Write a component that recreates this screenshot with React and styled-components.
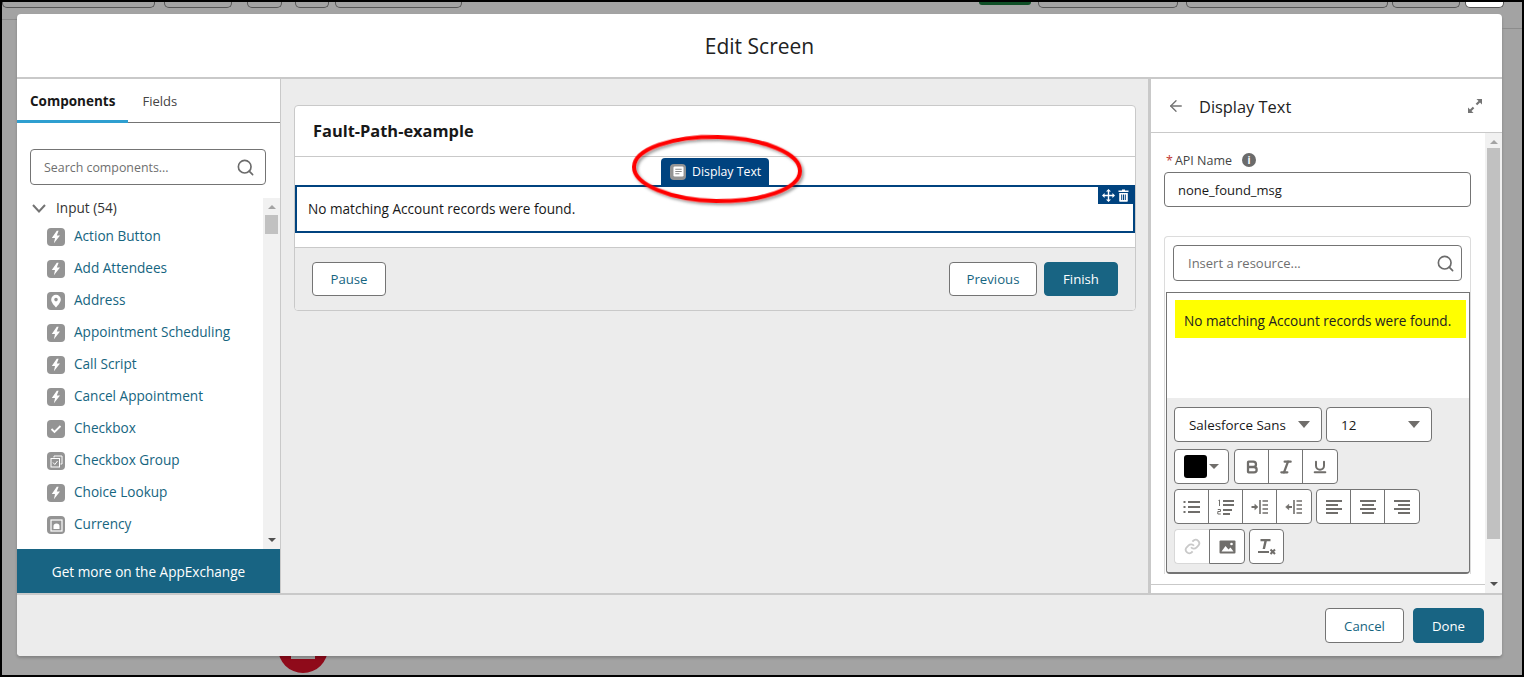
import React from "react"
import styled, { createGlobalStyle } from "styled-components"
import { ArrowLeft, Search as SearchIcon, Bold, Italic, Underline } from "lucide-react"

const Colors = {
  brand: "#186483",
  link: "#16657f",
  navy: "#00437f",
  border: "#747474",
  line: "#c9c9c9",
  shade: "#ececec",
  tile: "#949494",
  text: "#181818",
}

const GlobalStyle = createGlobalStyle`
  html, body {
    margin: 0;
    padding: 0;
    background: #a3a3a3;
  }
  body {
    font-family: "Open Sans", "Liberation Sans", sans-serif;
    font-size: 13.6px;
    color: ${Colors.text};
  }
  * {
    box-sizing: border-box;
  }
`

const Screen = styled.div`
  position: relative;
  width: 1524px;
  height: 677px;
  border: 2px solid #000;
  background: #a3a3a3;
  display: flex;
  flex-direction: column;
  overflow: hidden;
`

const BehindTop = styled.div`
  height: 12px;
  display: flex;
  align-items: flex-start;
`

const BehindButton = styled.div`
  height: 6px;
  width: ${props => props.$w}px;
  margin-left: ${props => props.$gap}px;
  border: 1px solid #555;
  border-top: 0;
  border-radius: 0 0 5px 5px;
  background: ${props => props.$bg || "transparent"};
  flex-shrink: 0;
`

const BehindPill = styled.div`
  height: 3px;
  width: 52px;
  margin-left: ${props => props.$gap}px;
  border-radius: 0 0 14px 14px;
  background: #0f4f26;
  flex-shrink: 0;
`

const MiddleRow = styled.div`
  display: flex;
  height: 642px;
  position: relative;
  z-index: 2;
`

const Gutter = styled.div`
  flex: 0 0 ${props => props.$w}px;
`

const GutterLine = styled.div`
  height: 1px;
  background: #8c8c8c;
  margin-top: ${props => props.$top}px;
`

const Modal = styled.div`
  width: 1485px;
  display: flex;
  flex-direction: column;
  background: #fff;
  border-radius: 4px;
  box-shadow: 0 2px 3px rgba(0, 0, 0, 0.2);
  overflow: hidden;
`

const ModalHeader = styled.div`
  height: 65px;
  flex-shrink: 0;
  border-bottom: 2px solid ${Colors.line};
  display: flex;
  align-items: center;
  justify-content: center;
  font-size: 21px;
  color: #222;
`

const ModalBody = styled.div`
  height: 514px;
  display: flex;
`

const ModalFooter = styled.div`
  height: 63px;
  flex-shrink: 0;
  border-top: 2px solid ${Colors.line};
  background: ${Colors.shade};
  display: flex;
  align-items: center;
  justify-content: flex-end;
  gap: 9px;
  padding-right: 18px;
`

const BehindBottom = styled.div`
  height: 19px;
  padding-left: 276px;
`

const RedCircle = styled.div`
  width: 50px;
  height: 50px;
  margin-top: -33px;
  border-radius: 50%;
  background: #8f0a1a;
  display: flex;
  justify-content: center;
  align-items: flex-end;
  padding-bottom: 14px;

  &::after {
    content: "";
    width: 24px;
    height: 10px;
    background: #a3a3a3;
  }
`

/* left palette */

const LeftPanel = styled.div`
  width: 264px;
  flex-shrink: 0;
  border-right: 1px solid ${Colors.line};
  display: flex;
  flex-direction: column;
`

const Tabs = styled.div`
  height: 44px;
  flex-shrink: 0;
  display: flex;
  border-bottom: 1px solid ${Colors.border};
`

const Tab = styled.div`
  padding: 2px 13px 0 ${props => (props.$active ? 13 : 14)}px;
  height: 44px;
  display: flex;
  align-items: center;
  font-size: ${props => (props.$active ? 13.5 : 13)}px;
  font-weight: ${props => (props.$active ? 700 : 400)};
  color: ${props => (props.$active ? Colors.text : "#444")};
  border-bottom: 3px solid ${props => (props.$active ? "#2e9fd0" : "transparent")};
`

const SearchBox = styled.div`
  height: ${props => props.$h}px;
  flex-shrink: 0;
  margin: ${props => props.$margin};
  border: 1px solid ${Colors.border};
  border-radius: 4px;
  background: #fff;
  display: flex;
  align-items: center;
  justify-content: space-between;
  padding: 0 ${props => props.$right}px 0 ${props => props.$left}px;
  font-size: ${props => props.$font}px;
  color: #6f6f6f;
`

const PaletteRow = styled.div`
  flex: 1;
  display: flex;
  min-height: 0;
`

const PaletteList = styled.div`
  flex: 1;
  overflow: hidden;
  padding-left: 15px;
`

const GroupHead = styled.div`
  height: 20px;
  margin-bottom: 10px;
  display: flex;
  align-items: center;
  gap: 10px;
  color: #333;
`

const GroupLabel = styled.span`
  margin-top: -2px;
`

const PaletteItem = styled.div`
  height: 18px;
  margin: 0 0 14px 15px;
  display: flex;
  align-items: center;
  gap: 9px;
  color: ${Colors.link};
`

const ItemLabel = styled.span`
  margin-top: -3px;
`

const IconTile = styled.span`
  width: ${props => props.$size || 18}px;
  height: ${props => props.$size || 18}px;
  border-radius: 4px;
  background: ${Colors.tile};
  flex-shrink: 0;
  display: flex;
  align-items: center;
  justify-content: center;
`

const Scrollbar = styled.div`
  width: 17px;
  flex-shrink: 0;
  background: #f1f1f1;
  display: flex;
  flex-direction: column;
  align-items: center;
  padding: 7px 0;
`

const ArrowUp = styled.div`
  width: 0;
  height: 0;
  border: 4px solid transparent;
  border-top: 0;
  border-bottom: 4px solid #a3a3a3;
`

const ArrowDown = styled.div`
  width: 0;
  height: 0;
  border: 4px solid transparent;
  border-bottom: 0;
  border-top: 4px solid #505050;
  margin-top: auto;
`

const Thumb = styled.div`
  width: 13px;
  height: ${props => props.$h}px;
  margin-top: ${props => props.$top}px;
  background: #c1c1c1;
`

const AppExchange = styled.div`
  height: 44px;
  flex-shrink: 0;
  background: ${Colors.brand};
  color: #fff;
  display: flex;
  align-items: center;
  justify-content: center;
`

/* centre canvas */

const Canvas = styled.div`
  width: 867px;
  flex-shrink: 0;
  background: ${Colors.shade};
  padding: 26px 0 0 13px;
`

const Card = styled.div`
  width: 842px;
  height: 206px;
  border: 1px solid ${Colors.line};
  border-radius: 4px;
  overflow: hidden;
  display: flex;
  flex-direction: column;
  background: #fff;
`

const CardTitle = styled.div`
  height: 51px;
  flex-shrink: 0;
  border-bottom: 1px solid ${Colors.line};
  display: flex;
  align-items: center;
  padding: 0 0 2px 18px;
  font-size: 16.4px;
  font-weight: 700;
`

const DisplayArea = styled.div`
  height: 91px;
  flex-shrink: 0;
  border-bottom: 1px solid ${Colors.line};
`

const TabHolder = styled.div`
  height: 29px;
  display: flex;
  justify-content: center;
  align-items: flex-end;
`

const ComponentTab = styled.div`
  width: 108px;
  height: 28px;
  background: ${Colors.navy};
  border-radius: 4px 4px 0 0;
  display: flex;
  align-items: center;
  gap: 6px;
  padding: 0 0 1px 9px;
  font-size: 12.3px;
  color: #fff;
`

const SelectedBox = styled.div`
  position: relative;
  height: 48px;
  margin-top: -1px;
  border: 2px solid ${Colors.navy};
  display: flex;
  align-items: center;
  padding: 0 0 2px 11px;
`

const Badge = styled.div`
  position: absolute;
  top: 0;
  right: 0;
  width: 35px;
  height: 17px;
  background: ${Colors.navy};
  display: flex;
  align-items: center;
  justify-content: center;
  gap: 3px;
`

const CardFooter = styled.div`
  flex: 1;
  background: ${Colors.shade};
  display: flex;
  align-items: center;
  justify-content: space-between;
  padding: 0 17px;
`

const ButtonRow = styled.div`
  display: flex;
  gap: 7px;
`

const Button = styled.button`
  height: ${props => props.$h || 35}px;
  width: ${props => props.$w}px;
  border-radius: 4px;
  border: 1px solid ${props => (props.$brand ? Colors.brand : Colors.border)};
  background: ${props => (props.$brand ? Colors.brand : "#fff")};
  color: ${props => (props.$brand ? "#fff" : Colors.link)};
  font-family: inherit;
  font-size: 13.2px;
  padding: 0;
`

/* right properties panel */

const RightPanel = styled.div`
  flex: 1;
  border-left: 3px solid ${Colors.line};
  display: flex;
  flex-direction: column;
  min-width: 0;
`

const PanelHead = styled.div`
  height: 54px;
  flex-shrink: 0;
  border-bottom: 1px solid ${Colors.line};
  display: flex;
  align-items: center;
  padding: 0 19px 0 16px;
  font-size: 16.4px;
  color: #222;
`

const PanelTitle = styled.span`
  margin: 2px 0 0 14px;
  flex: 1;
`

const PanelRow = styled.div`
  height: 460px;
  flex-shrink: 0;
  display: flex;
`

const PanelColumn = styled.div`
  flex: 1;
  min-width: 0;
`

const PanelForm = styled.div`
  height: 452px;
  overflow: hidden;
  padding: 18px 0 0 13px;
  border-bottom: 1px solid ${Colors.line};
`

const Label = styled.div`
  height: 18px;
  display: flex;
  align-items: center;
  margin-bottom: 3px;
  font-size: 12.5px;
  color: #444;
`

const Required = styled.span`
  color: #c23934;
  margin: 0 2px 0 2px;
`

const InfoDot = styled.span`
  width: 14px;
  height: 14px;
  margin-left: 10px;
  border-radius: 50%;
  background: #6b6b6b;
  color: #fff;
  font-size: 10px;
  font-weight: 700;
  display: flex;
  align-items: center;
  justify-content: center;
`

const TextInput = styled.div`
  width: 307px;
  height: 35px;
  border: 1px solid ${Colors.border};
  border-radius: 4px;
  display: flex;
  align-items: center;
  padding-left: 13px;
  font-size: 13px;
`

const EditorCard = styled.div`
  width: 307px;
  margin-top: 29px;
  border: 1px solid #dcdcdc;
  border-bottom: 0;
  border-radius: 4px 4px 0 0;
`

const ResourceHolder = styled.div`
  padding: 8px 8px 11px;
`

const Editor = styled.div`
  margin: 0 0 0 1px;
  width: 304px;
  border: 1px solid ${Colors.border};
  border-bottom: 2px solid ${Colors.border};
  border-radius: 0 0 4px 4px;
  overflow: hidden;
`

const EditorText = styled.div`
  height: 105px;
  padding: 7px 3px 0 8px;
`

const Highlight = styled.div`
  height: 38px;
  background: #ffff00;
  display: flex;
  align-items: center;
  padding: 3px 0 0 9px;
  color: #222;
`

const Toolbar = styled.div`
  background: ${Colors.shade};
  padding: 9px 0 8px 7px;
  display: flex;
  flex-direction: column;
  gap: 5px;
`

const ToolRow = styled.div`
  display: flex;
  gap: ${props => props.$gap || 4}px;
  margin-bottom: ${props => props.$after || 0}px;
`

const Select = styled.div`
  width: ${props => props.$w}px;
  height: 35px;
  background: #fff;
  border: 1px solid ${Colors.border};
  border-radius: 4px;
  display: flex;
  align-items: center;
  justify-content: space-between;
  padding: 0 11px 0 14px;
  font-size: 13.4px;
`

const Caret = styled.span`
  width: 0;
  height: 0;
  border: ${props => props.$size || 6}px solid transparent;
  border-bottom: 0;
  border-top: ${props => (props.$size ? props.$size : 7)}px solid #706e6b;
`

const ColorButton = styled.div`
  width: 55px;
  height: 35px;
  background: #fff;
  border: 1px solid ${Colors.border};
  border-radius: 4px;
  display: flex;
  align-items: center;
  gap: 2px;
  padding-left: 9px;
`

const Swatch = styled.span`
  width: 23px;
  height: 23px;
  background: #000;
  border-radius: 3px;
`

const ToolGroup = styled.div`
  display: flex;
  height: 35px;
  border: 1px solid ${Colors.border};
  border-radius: 4px;
  overflow: hidden;
  background: #fff;
`

const ToolButton = styled.div`
  width: ${props => props.$w || 34}px;
  display: flex;
  align-items: center;
  justify-content: center;
  color: #706e6b;
  border-right: 1px solid ${Colors.border};
  &:last-child {
    border-right: 0;
  }
`

/* the link button is disabled, so its half of the pair has a pale outline */
const JoinedTools = styled.div`
  display: flex;
`

const DisabledTool = styled.div`
  width: 35px;
  height: 35px;
  background: #fff;
  border: 1px solid #d8d8d8;
  border-right: 0;
  border-radius: 4px 0 0 4px;
  display: flex;
  align-items: center;
  justify-content: center;
`

const JoinedEnd = styled(ToolGroup)`
  border-radius: 0 4px 4px 0;
`

const Bolt = () => (
  <svg width="12" height="14" viewBox="0 0 12 14">
    <path d="M6.8 0.8 L1.8 7.9 H5 L3.9 13.2 L10 5.6 H6.8 L8.6 0.8 Z" fill="#fff" />
  </svg>
)

const Pin = () => (
  <svg width="12" height="14" viewBox="0 0 12 14">
    <path
      fillRule="evenodd"
      d="M6 0.8 A4.8 4.8 0 0 0 1.2 5.6 C1.2 8.6 4.4 11.8 6 13.4 C7.6 11.8 10.8 8.6 10.8 5.6 A4.8 4.8 0 0 0 6 0.8 Z M6 3.8 A1.8 1.8 0 1 1 6 7.4 A1.8 1.8 0 1 1 6 3.8 Z"
      fill="#fff"
    />
  </svg>
)

const Check = () => (
  <svg width="12" height="10" viewBox="0 0 12 10">
    <path d="M1.5 5 L4.5 8 L10.5 2" stroke="#fff" strokeWidth="1.8" fill="none" />
  </svg>
)

const Group = () => (
  <svg width="13" height="13" viewBox="0 0 13 13" fill="none" stroke="#fff" strokeWidth="1">
    <path d="M4 2.5 V1 H12 V9 H10.5" />
    <rect x="1" y="3.5" width="8.5" height="8.5" />
    <path d="M3 7.5 L4.8 9.5 L7.5 6" />
  </svg>
)

const Currency = () => (
  <svg width="13" height="13" viewBox="0 0 13 13">
    <rect x="1" y="1" width="11" height="11" fill="none" stroke="#fff" strokeWidth="1.2" />
    <path d="M3.5 10 V7 A3 2.6 0 0 1 9.5 7 V10 Z" fill="#fff" />
  </svg>
)

const TextLines = () => (
  <svg width="11" height="11" viewBox="0 0 12 12">
    <rect x="0.5" y="0.5" width="11" height="11" rx="1.5" fill="#fff" />
    <path d="M2.5 3.5 H9.5 M2.5 6 H9.5 M2.5 8.5 H7" stroke="#8a8a8a" strokeWidth="1.1" />
  </svg>
)

const tileIcons = { bolt: Bolt, pin: Pin, check: Check, group: Group, currency: Currency }

const paletteItems = [
  ["bolt", "Action Button"],
  ["bolt", "Add Attendees"],
  ["pin", "Address"],
  ["bolt", "Appointment Scheduling"],
  ["bolt", "Call Script"],
  ["bolt", "Cancel Appointment"],
  ["check", "Checkbox"],
  ["group", "Checkbox Group"],
  ["bolt", "Choice Lookup"],
  ["currency", "Currency"],
]

const Glass = () => <SearchIcon size={19} color="#6b6b6b" strokeWidth={2.1} />

const Chevron = () => (
  <svg width="14" height="9" viewBox="0 0 14 9">
    <path d="M1 1 L7 7.5 L13 1" stroke="#747474" strokeWidth="2" fill="none" />
  </svg>
)

const Expand = () => (
  <svg width="16" height="16" viewBox="0 0 16 16" fill="#747474">
    <path d="M9.5 1 H15 V6.5 L13 4.5 L10.2 7.3 L8.7 5.8 L11.5 3 Z" />
    <path d="M6.5 15 H1 V9.5 L3 11.5 L5.8 8.7 L7.3 10.2 L4.5 13 Z" />
  </svg>
)

const MoveIcon = () => (
  <svg width="13" height="13" viewBox="0 0 13 13" fill="#fff">
    <path d="M6.5 0 L9 2.6 H7.2 V5.8 H10.4 V4 L13 6.5 L10.4 9 V7.2 H7.2 V10.4 H9 L6.5 13 L4 10.4 H5.8 V7.2 H2.6 V9 L0 6.5 L2.6 4 V5.8 H5.8 V2.6 H4 Z" />
  </svg>
)

const TrashIcon = () => (
  <svg width="11" height="13" viewBox="0 0 11 13" fill="#fff">
    <path d="M4 0.5 H7 V1.5 H10.5 V3 H0.5 V1.5 H4 Z" />
    <path
      fillRule="evenodd"
      d="M1.2 4 H9.8 V12 A0.8 0.8 0 0 1 9 12.8 H2 A0.8 0.8 0 0 1 1.2 12 Z M3.2 5.5 V11 H4.2 V5.5 Z M5 5.5 V11 H6 V5.5 Z M6.8 5.5 V11 H7.8 V5.5 Z"
    />
  </svg>
)

const Ink = ({ children, w = 18, h = 16 }) => (
  <svg
    width={w}
    height={h}
    viewBox={`0 0 ${w} ${h}`}
    fill="none"
    stroke="#706e6b"
    strokeWidth="2"
  >
    {children}
  </svg>
)

const BulletList = () => (
  <Ink>
    <path d="M5 3 H17 M5 8 H17 M5 13 H17" />
    <path d="M0.5 3 H2.5 M0.5 8 H2.5 M0.5 13 H2.5" />
  </Ink>
)

const NumberList = () => (
  <Ink>
    <path d="M6 2 H17 M6 6 H17 M6 11 H15 M6 15 H13" />
    <path d="M1.5 1.5 L2.5 1 V7" strokeWidth="1" />
    <path d="M0.8 10.5 H3.5 V12.5 H0.8 V15 H3.8" strokeWidth="1" />
  </Ink>
)

const IndentIn = () => (
  <Ink>
    <path d="M0.5 8 H5.5" />
    <path d="M3.8 5.2 L7 8 L3.8 10.8 Z" fill="#706e6b" strokeWidth="0.5" />
    <path d="M9 1 V15" strokeWidth="1.6" />
    <path d="M11.5 2 H17 M11.5 6 H17 M11.5 10 H17 M11.5 14 H17" strokeWidth="1.5" />
  </Ink>
)

const IndentOut = () => (
  <Ink>
    <path d="M2.5 8 H7" />
    <path d="M3.8 5.2 L0.6 8 L3.8 10.8 Z" fill="#706e6b" strokeWidth="0.5" />
    <path d="M9 1 V15" strokeWidth="1.6" />
    <path d="M11.5 2 H17 M11.5 6 H17 M11.5 10 H17 M11.5 14 H17" strokeWidth="1.5" />
  </Ink>
)

const alignLines = {
  left: "M1 2 H17 M1 6 H13 M1 10 H17 M1 14 H13",
  center: "M1 2 H17 M3 6 H15 M1 10 H17 M3 14 H15",
  right: "M1 2 H17 M5 6 H17 M1 10 H17 M5 14 H17",
}

const AlignIcon = ({ side }) => (
  <Ink>
    <path d={alignLines[side]} />
  </Ink>
)

const LinkIcon = () => (
  <svg width="17" height="17" viewBox="0 0 24 24" fill="none" stroke="#c9c9c9" strokeWidth="2.6">
    <path d="M10 13a5 5 0 0 0 7.5.5l3-3a5 5 0 0 0-7-7l-1.7 1.7" />
    <path d="M14 11a5 5 0 0 0-7.5-.5l-3 3a5 5 0 0 0 7 7l1.7-1.7" />
  </svg>
)

const PictureIcon = () => (
  <svg width="17" height="14" viewBox="0 0 17 14">
    <rect x="0.5" y="0.5" width="16" height="13" rx="1" fill="#706e6b" />
    <path d="M2.5 11.5 L6.5 6 L9.5 9.5 L11.5 7.5 L14.5 11.5 Z" fill="#fff" />
    <circle cx="12.5" cy="4" r="1.3" fill="#fff" />
  </svg>
)

const ClearFormat = () => (
  <svg width="20" height="18" viewBox="0 0 20 18" fill="#706e6b">
    <path d="M3.5 1 H13.5 V3.2 H9.8 L8 11 H5.6 L7.3 3.2 H3.5 Z" />
    <rect x="1" y="13" width="11" height="2" />
    <path d="M13.5 11.5 L18 16 M18 11.5 L13.5 16" stroke="#706e6b" strokeWidth="2" />
  </svg>
)

const EllipseOverlay = styled.svg`
  position: absolute;
  left: 626px;
  top: 128px;
  pointer-events: none;
  z-index: 5;
`

const App = () => {
  return (
    <>
      <GlobalStyle />
      <Screen>
        <BehindTop>
          <BehindButton $gap={0} $w={153} />
          <BehindButton $gap={9} $w={68} />
          <BehindButton $gap={15} $w={35} />
          <BehindButton $gap={13} $w={34} />
          <BehindButton $gap={6} $w={127} />
          <BehindPill $gap={517} />
          <BehindButton $gap={7} $w={140} />
          <BehindButton $gap={8} $w={202} />
          <BehindButton $gap={4} $w={68} />
          <BehindButton $gap={5} $w={39} $bg="#fff" />
        </BehindTop>
        <MiddleRow>
          <Gutter $w={15}>
            <GutterLine $top={5} />
          </Gutter>
          <Modal>
            <ModalHeader>Edit Screen</ModalHeader>
            <ModalBody>
              <LeftPanel>
                <Tabs>
                  <Tab $active>Components</Tab>
                  <Tab>Fields</Tab>
                </Tabs>
                <SearchBox $h={36} $margin="26px 14px 13px 13px" $left={13} $right={10} $font={12.4}>
                  Search components...
                  <Glass />
                </SearchBox>
                <PaletteRow>
                  <PaletteList>
                    <GroupHead>
                      <Chevron />
                      <GroupLabel>Input (54)</GroupLabel>
                    </GroupHead>
                    {paletteItems.map(([icon, name]) => {
                      const Icon = tileIcons[icon]
                      return (
                        <PaletteItem key={name}>
                          <IconTile>
                            <Icon />
                          </IconTile>
                          <ItemLabel>{name}</ItemLabel>
                        </PaletteItem>
                      )
                    })}
                  </PaletteList>
                  <Scrollbar>
                    <ArrowUp />
                    <Thumb $h={19} $top={6} />
                    <ArrowDown />
                  </Scrollbar>
                </PaletteRow>
                <AppExchange>Get more on the AppExchange</AppExchange>
              </LeftPanel>
              <Canvas>
                <Card>
                  <CardTitle>Fault-Path-example</CardTitle>
                  <DisplayArea>
                    <TabHolder>
                      <ComponentTab>
                        <IconTile $size={16}>
                          <TextLines />
                        </IconTile>
                        Display Text
                      </ComponentTab>
                    </TabHolder>
                    <SelectedBox>
                      No matching Account records were found.
                      <Badge>
                        <MoveIcon />
                        <TrashIcon />
                      </Badge>
                    </SelectedBox>
                  </DisplayArea>
                  <CardFooter>
                    <Button $w={74} $h={34}>
                      Pause
                    </Button>
                    <ButtonRow>
                      <Button $w={88} $h={34}>
                        Previous
                      </Button>
                      <Button $w={74} $h={34} $brand>
                        Finish
                      </Button>
                    </ButtonRow>
                  </CardFooter>
                </Card>
              </Canvas>
              <RightPanel>
                <PanelHead>
                  <ArrowLeft size={18} color="#747474" strokeWidth={1.8} />
                  <PanelTitle>Display Text</PanelTitle>
                  <Expand />
                </PanelHead>
                <PanelRow>
                  <PanelColumn>
                    <PanelForm>
                      <Label>
                        <Required>*</Required>API Name
                        <InfoDot>i</InfoDot>
                      </Label>
                      <TextInput>none_found_msg</TextInput>
                      <EditorCard>
                        <ResourceHolder>
                          <SearchBox $h={36} $margin="0" $left={14} $right={6} $font={13}>
                            Insert a resource...
                            <Glass />
                          </SearchBox>
                        </ResourceHolder>
                        <Editor>
                          <EditorText>
                            <Highlight>No matching Account records were found.</Highlight>
                          </EditorText>
                          <Toolbar>
                            <ToolRow $after={2}>
                              <Select $w={148}>
                                Salesforce Sans
                                <Caret />
                              </Select>
                              <Select $w={106}>
                                12
                                <Caret />
                              </Select>
                            </ToolRow>
                            <ToolRow $gap={5}>
                              <ColorButton>
                                <Swatch />
                                <Caret $size={5} />
                              </ColorButton>
                              <ToolGroup>
                                <ToolButton>
                                  <Bold size={16} strokeWidth={3.4} />
                                </ToolButton>
                                <ToolButton>
                                  <Italic size={16} strokeWidth={3.4} />
                                </ToolButton>
                                <ToolButton>
                                  <Underline size={16} strokeWidth={3} />
                                </ToolButton>
                              </ToolGroup>
                            </ToolRow>
                            <ToolRow>
                              <ToolGroup>
                                <ToolButton>
                                  <BulletList />
                                </ToolButton>
                                <ToolButton>
                                  <NumberList />
                                </ToolButton>
                                <ToolButton>
                                  <IndentIn />
                                </ToolButton>
                                <ToolButton>
                                  <IndentOut />
                                </ToolButton>
                              </ToolGroup>
                              <ToolGroup>
                                <ToolButton>
                                  <AlignIcon side="left" />
                                </ToolButton>
                                <ToolButton>
                                  <AlignIcon side="center" />
                                </ToolButton>
                                <ToolButton>
                                  <AlignIcon side="right" />
                                </ToolButton>
                              </ToolGroup>
                            </ToolRow>
                            <ToolRow>
                              <JoinedTools>
                                <DisabledTool>
                                  <LinkIcon />
                                </DisabledTool>
                                <JoinedEnd>
                                  <ToolButton>
                                    <PictureIcon />
                                  </ToolButton>
                                </JoinedEnd>
                              </JoinedTools>
                              <ToolGroup>
                                <ToolButton $w={33}>
                                  <ClearFormat />
                                </ToolButton>
                              </ToolGroup>
                            </ToolRow>
                          </Toolbar>
                        </Editor>
                      </EditorCard>
                    </PanelForm>
                  </PanelColumn>
                  <Scrollbar>
                    <ArrowUp />
                    <Thumb $h={391} $top={4} />
                    <ArrowDown />
                  </Scrollbar>
                </PanelRow>
              </RightPanel>
            </ModalBody>
            <ModalFooter>
              <Button $w={79}>Cancel</Button>
              <Button $w={71} $brand>
                Done
              </Button>
            </ModalFooter>
          </Modal>
          <Gutter $w={20}>
            <GutterLine $top={14} />
          </Gutter>
        </MiddleRow>
        <BehindBottom>
          <RedCircle />
        </BehindBottom>
        <EllipseOverlay width="184" height="84" viewBox="0 0 184 84">
          <defs>
            <filter id="ringShadow" x="-10%" y="-20%" width="120%" height="140%">
              <feDropShadow dx="2" dy="2" stdDeviation="1.5" floodColor="#000" floodOpacity="0.4" />
            </filter>
          </defs>
          <ellipse
            cx="89"
            cy="39"
            rx="83"
            ry="32"
            fill="none"
            stroke="#ff0000"
            strokeWidth="4"
            transform="rotate(1.5 89 39)"
            filter="url(#ringShadow)"
          />
        </EllipseOverlay>
      </Screen>
    </>
  )
}

export default App
